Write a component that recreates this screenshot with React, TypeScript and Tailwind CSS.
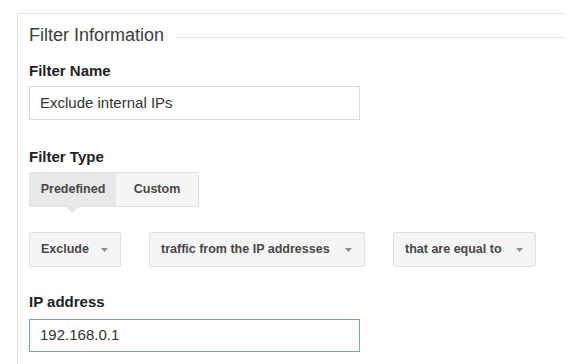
import React from "react";

function Caret() {
  return (
    <svg width="7" height="4" viewBox="0 0 7 4" className="shrink-0">
      <path d="M0 0 L7 0 L3.5 4 Z" fill="#8a8a8a" />
    </svg>
  );
}

function Dropdown({ label, width }: { label: string; width: string }) {
  return (
    <div
      className={`${width} h-[35px] flex items-center justify-between pl-[11px] pr-[12px] bg-[#f5f5f5] border border-[#e0e0e0] rounded-[2px] text-[12.5px] font-bold text-[#474747]`}
    >
      <span>{label}</span>
      <Caret />
    </div>
  );
}

export default function App() {
  return (
    <div
      className="w-[574px] h-[364px] bg-white pt-[13px] pl-[17px] overflow-hidden"
      style={{ fontFamily: '"Liberation Sans", Arial, sans-serif' }}
    >
      <div className="w-[548px] h-[360px] border-l border-t border-[#e2e2e2] pl-[11px] pt-[10px] flex flex-col">
        {/* legend */}
        <div className="h-[22px] flex items-center">
          <span className="text-[18px] text-[#3c3c3c] leading-[22px]">Filter Information</span>
          <div className="flex-1 ml-[12px] mt-[4px] border-t border-[#e4e4e4]" />
        </div>

        <div className="mt-[16px] h-[18px] leading-[18px] text-[15px] font-bold text-[#222]">Filter Name</div>
        <div className="mt-[6px] w-[331px] h-[34px] border border-[#dadada] flex items-center pl-[10px] text-[15px] text-[#333]">
          Exclude internal IPs
        </div>

        <div className="mt-[28px] h-[18px] leading-[18px] text-[15px] font-bold text-[#222]">Filter Type</div>
        <div className="mt-[6px] relative flex w-[170px] h-[35px] border border-[#e0e0e0] rounded-[2px] text-[12.5px] font-bold text-[#474747]">
          <div className="w-[86px] bg-[#e8e8e8] flex items-center justify-center">Predefined</div>
          <div className="flex-1 bg-[#f5f5f5] flex items-center justify-center">Custom</div>
          <div className="absolute left-[38px] top-[29px] w-[9px] h-[9px] bg-[#e8e8e8] rotate-45 border-r border-b border-[#e0e0e0]" />
        </div>

        <div className="mt-[25px] flex gap-[28px]">
          <Dropdown label="Exclude" width="w-[92px]" />
          <Dropdown label="traffic from the IP addresses" width="w-[216px]" />
          <Dropdown label="that are equal to" width="w-[143px]" />
        </div>

        <div className="mt-[26px] h-[18px] leading-[18px] text-[15px] font-bold text-[#222]">IP address</div>
        <div className="mt-[8px] w-[331px] h-[33px] border border-[#74a2e3] flex items-center pl-[10px] text-[15px] text-[#333]">
          192.168.0.1
        </div>
      </div>
    </div>
  );
}
